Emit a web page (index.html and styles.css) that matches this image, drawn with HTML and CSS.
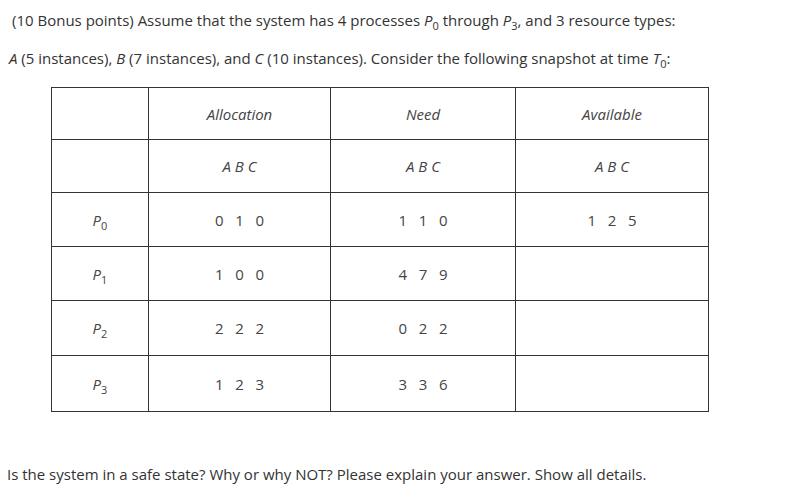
FILE: index.html
```html
<!DOCTYPE html>
<html>
<head>
<meta charset="utf-8">
<link rel="stylesheet" href="styles.css">
</head>
<body>
<div class="page">
  <p class="line l1">(10 Bonus points) Assume that the system has 4 processes <i>P</i><sub>0</sub> through <i>P</i><sub>3</sub>, and 3 resource types:</p>
  <p class="line l2"><i>A</i> (5 instances), <i>B</i> (7 instances), and <i>C</i> (10 instances). Consider the following snapshot at time <i>T</i><sub>0</sub>:</p>
  <table class="snap">
    <colgroup>
      <col class="c1"><col class="c2"><col class="c3"><col class="c4">
    </colgroup>
    <tr class="r1"><td></td><td><i>Allocation</i></td><td><i>Need</i></td><td><i>Available</i></td></tr>
    <tr class="r2"><td></td><td><i>A B C</i></td><td><i>A B C</i></td><td><i>A B C</i></td></tr>
    <tr class="r3"><td><i>P</i><sub>0</sub></td><td>0&nbsp;&nbsp; 1&nbsp;&nbsp; 0</td><td>1&nbsp;&nbsp; 1&nbsp;&nbsp; 0</td><td>1&nbsp;&nbsp; 2&nbsp;&nbsp; 5</td></tr>
    <tr class="r4"><td><i>P</i><sub>1</sub></td><td>1&nbsp;&nbsp; 0&nbsp;&nbsp; 0</td><td>4&nbsp;&nbsp; 7&nbsp;&nbsp; 9</td><td></td></tr>
    <tr class="r5"><td><i>P</i><sub>2</sub></td><td>2&nbsp;&nbsp; 2&nbsp;&nbsp; 2</td><td>0&nbsp;&nbsp; 2&nbsp;&nbsp; 2</td><td></td></tr>
    <tr class="r6"><td><i>P</i><sub>3</sub></td><td>1&nbsp;&nbsp; 2&nbsp;&nbsp; 3</td><td>3&nbsp;&nbsp; 3&nbsp;&nbsp; 6</td><td></td></tr>
  </table>
  <p class="line l3">Is the system in a safe state? Why or why NOT? Please explain your answer. Show all details.</p>
</div>
</body>
</html>
```
FILE: styles.css
```css
html, body {
  margin: 0;
  padding: 0;
  background: #fff;
}
body {
  font-family: "Open Sans", "DejaVu Sans", sans-serif;
  color: #333;
  font-size: 15px;
}
.page {
  padding: 0;
}
.line {
  margin: 0;
  line-height: 20px;
}
.l1 {
  padding: 10px 0 0 12px;
}
.l2 {
  padding: 18px 0 0 9px;
}
sub {
  font-size: 11px;
  vertical-align: -4px;
  line-height: 0;
}
.snap {
  margin: 19px 0 0 51px;
  border-collapse: collapse;
  table-layout: fixed;
  width: 657px;
  font-size: 15px;
  color: #444;
}
.snap td {
  border: 1px solid #333;
  text-align: center;
  vertical-align: middle;
  padding: 0;
  height: 52px;
}
.c1 { width: 97px; }
.c2 { width: 182px; }
.c3 { width: 185px; }
.c4 { width: 193px; }
.r1 td { height: 51px; }
.r2 td { height: 52px; }
.r3 td { height: 53px; }
.r4 td { height: 53px; }
.r5 td { height: 54px; }
.r6 td { height: 55px; }
.l3 {
  padding: 52px 0 0 7px;
}
```
